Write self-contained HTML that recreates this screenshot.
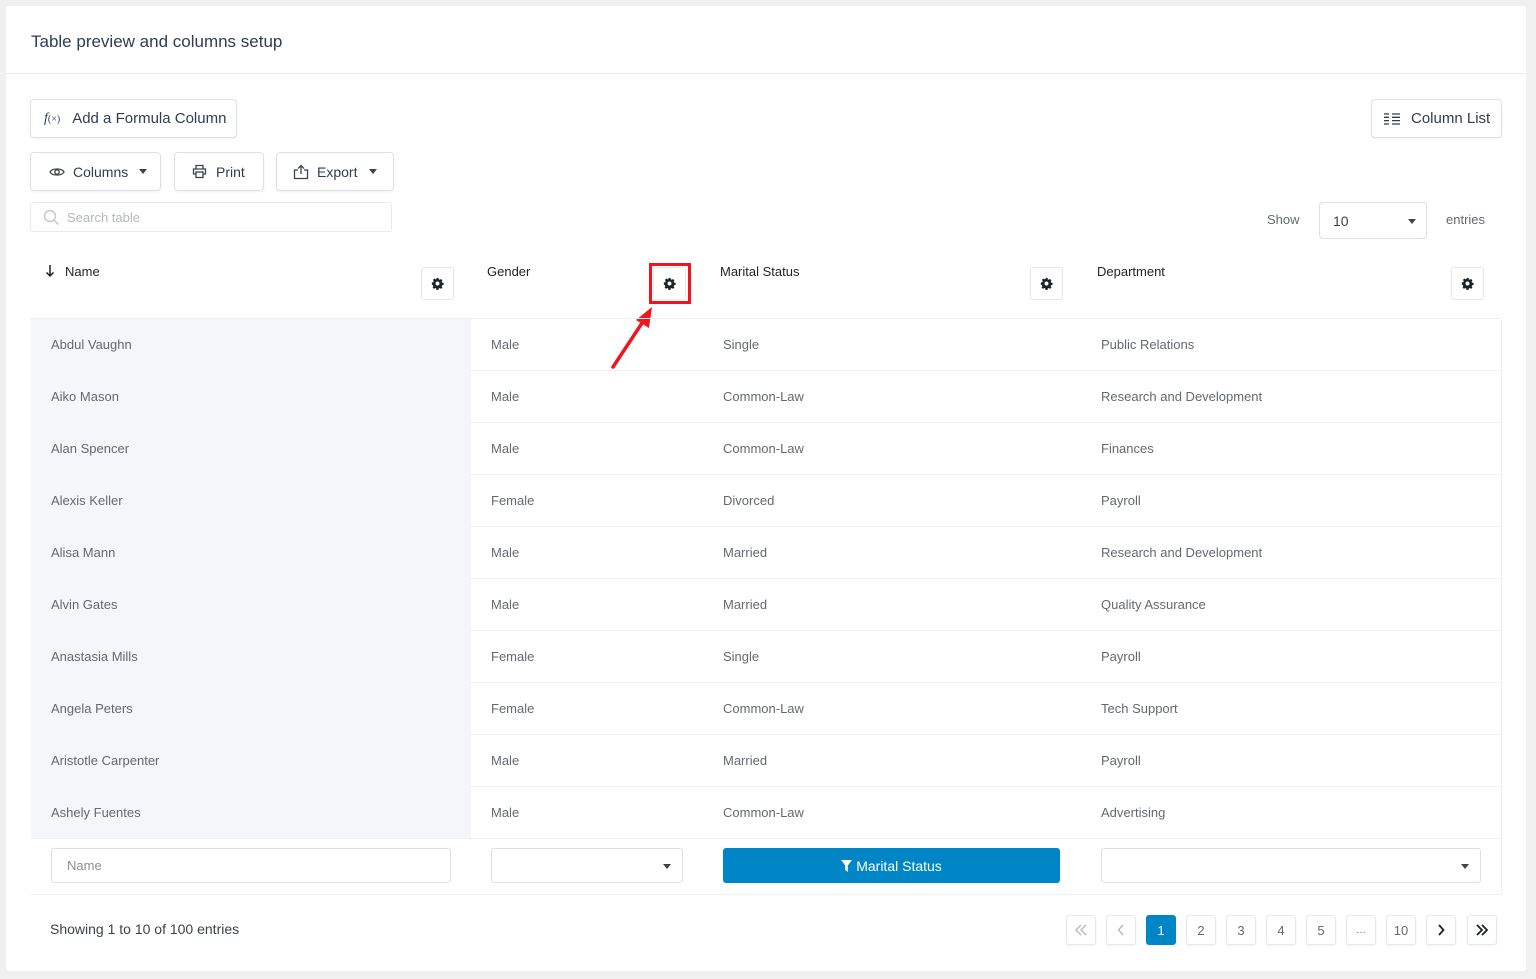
<!DOCTYPE html>
<html><head><meta charset="utf-8"><style>
*{box-sizing:border-box;margin:0;padding:0}
body{width:1536px;height:979px;background:#f0f0f1;font-family:"Liberation Sans",sans-serif;position:relative;overflow:hidden;color:#3c434a}
.card{position:absolute;left:6px;top:6px;width:1520px;height:965px;background:#fff;border-radius:3px}
.hdr{position:absolute;left:0;top:0;width:1520px;height:68px;border-bottom:1px solid #e8ebef}
.hdr span{position:absolute;left:25px;top:26px;font-size:17px;color:#2f3d52}
.btn{position:absolute;background:#fff;border:1px solid #dde1e6;border-radius:4px;box-shadow:0 1px 2px rgba(0,0,0,.06);font-size:14px;color:#2f3d52;display:flex;align-items:center}
.a{position:absolute}
.gear{position:absolute;width:33px;height:33px;border:1px solid #e3e6ea;border-radius:3px;background:#fff;display:flex;align-items:center;justify-content:center}
.th{position:absolute;font-size:13px;color:#1d2327;top:264px}
.td{position:absolute;font-size:13px;color:#646970}
.line{position:absolute;height:1px;background:#eef0f3}
.pg{position:absolute;top:915px;width:30px;height:30px;border:1px solid #e6e8eb;border-radius:3px;background:#fff;font-size:13px;color:#646970;display:flex;align-items:center;justify-content:center;box-shadow:0 1px 2px rgba(0,0,0,.05)}
.caret{width:0;height:0;border-left:4.5px solid transparent;border-right:4.5px solid transparent;border-top:5px solid #3c434a;display:inline-block}
</style></head><body>
<div class="card">
<div class="hdr"><span>Table preview and columns setup</span></div>
</div>
<svg width="0" height="0" style="position:absolute"><defs><symbol id="g" viewBox="0 0 16 16"><path fill="#1d2327" d="M6.8 1h2.4l.4 1.8 1.2.6 1.6-1 1.7 1.7-1 1.6.6 1.2 1.8.4v2.4l-1.8.4-.6 1.2 1 1.6-1.7 1.7-1.6-1-1.2.6-.4 1.8H6.8l-.4-1.8-1.2-.6-1.6 1-1.7-1.7 1-1.6-.6-1.2L1 9.2V6.8l1.8-.4.6-1.2-1-1.6 1.7-1.7 1.6 1 1.2-.6zM8 5.6A2.4 2.4 0 1 0 8 10.4 2.4 2.4 0 1 0 8 5.6z"/></symbol></defs></svg>

<div class="btn" style="left:30px;top:99px;width:207px;height:39px;padding-left:13px"><span style="font-family:'Liberation Serif',serif;font-style:italic;font-size:14px;margin-right:12px">f<span style="font-size:10px;font-style:normal">(×)</span></span><span style="font-size:15px">Add a Formula Column</span></div>
<div class="btn" style="left:1371px;top:99px;width:131px;height:39px;padding-left:12px"><svg width="16" height="12" viewBox="0 0 16 12" style="margin-right:11px"><g stroke="#2f3d52" stroke-width="1.3"><path d="M0 1h5M0 4.3h5M0 7.6h5M0 11h5M8 1h8M8 4.3h8M8 7.6h8M8 11h8"/></g></svg><span style="font-size:15px">Column List</span></div>

<div class="btn" style="left:30px;top:152px;width:131px;height:39px;padding-left:18px"><svg width="16" height="12" viewBox="0 0 16 12" style="margin-right:8px"><path d="M1 6C3 2 13 2 15 6 13 10 3 10 1 6z" fill="none" stroke="#3c434a" stroke-width="1.3"/><circle cx="8" cy="6" r="2.2" fill="none" stroke="#3c434a" stroke-width="1.3"/></svg><b style="font-weight:normal;margin-right:11px">Columns</b><span class="caret"></span></div>
<div class="btn" style="left:174px;top:152px;width:90px;height:39px;padding-left:17px"><svg width="15" height="15" viewBox="0 0 15 15" style="margin-right:9px"><g fill="none" stroke="#3c434a" stroke-width="1.3"><path d="M4 5V1.5h7V5M4 10H1.5V5h12v5H11"/><rect x="4" y="8" width="7" height="5.5"/></g></svg>Print</div>
<div class="btn" style="left:276px;top:152px;width:118px;height:39px;padding-left:16px"><svg width="16" height="16" viewBox="0 0 16 16" style="margin-right:8px"><g fill="none" stroke="#3c434a" stroke-width="1.3"><path d="M5 6H1.5v8.5h13V6H11M8 10V1.5M5 4.5l3-3 3 3"/></g></svg><b style="font-weight:normal;margin-right:12px">Export</b><span class="caret"></span></div>

<div class="a" style="left:30px;top:202px;width:362px;height:30px;border:1px solid #e8ebef;border-radius:3px"><svg width="17" height="17" viewBox="0 0 17 17" style="position:absolute;left:12px;top:6px"><circle cx="7" cy="7" r="5.5" fill="none" stroke="#c3c8ce" stroke-width="1.4"/><path d="M11 11l4.5 4.5" stroke="#c3c8ce" stroke-width="1.4"/></svg><span style="position:absolute;left:36px;top:7px;font-size:13px;color:#b4b9be">Search table</span></div>

<div class="a" style="left:1267px;top:212px;font-size:13px;color:#646970">Show</div>
<div class="a" style="left:1319px;top:202px;width:108px;height:37px;border:1px solid #dcdfe3;border-radius:4px"><span style="position:absolute;left:13px;top:10px;font-size:14px;color:#3c434a">10</span><span class="caret" style="position:absolute;left:88px;top:16px"></span></div>
<div class="a" style="left:1446px;top:212px;font-size:13px;color:#646970">entries</div>

<svg class="a" style="left:45px;top:264px" width="10" height="14"><path d="M5 1v11M1.5 8.5L5 12l3.5-3.5" fill="none" stroke="#1d2327" stroke-width="1.5"/></svg>
<div class="th" style="left:65px">Name</div>
<div class="th" style="left:487px">Gender</div>
<div class="th" style="left:720px">Marital Status</div>
<div class="th" style="left:1097px">Department</div>
<div class="gear" style="left:421px;top:267px"><svg width="13" height="13"><use href="#g"/></svg></div>
<div class="gear" style="left:653px;top:267px"><svg width="13" height="13"><use href="#g"/></svg></div>
<div class="gear" style="left:1030px;top:267px"><svg width="13" height="13"><use href="#g"/></svg></div>
<div class="gear" style="left:1451px;top:267px"><svg width="13" height="13"><use href="#g"/></svg></div>
<div class="a" style="left:649px;top:263px;width:42px;height:41px;border:3px solid #f0141e"></div>
<svg class="a" style="left:600px;top:300px" width="60" height="75"><path d="M13 67L46 17" stroke="#f0141e" stroke-width="3.5" stroke-linecap="round"/><path d="M52 7L36 20 49 28z" fill="#f0141e"/></svg>

<div class="line" style="left:30px;top:318px;width:1472px"></div>
<div class="a" style="left:31px;top:319px;width:440px;height:519px;background:#f4f6fa"></div>
<div class="a" style="left:1501px;top:318px;width:1px;height:577px;background:#eef0f3"></div>
<div id="rows"></div>
<div class="line" style="left:30px;top:838px;width:1472px"></div>
<div class="line" style="left:30px;top:894px;width:1472px"></div>

<div class="a" style="left:51px;top:848px;width:400px;height:35px;border:1px solid #dcdfe3;border-radius:3px"><span style="position:absolute;left:15px;top:9px;font-size:13px;color:#8c8f94">Name</span></div>
<div class="a" style="left:491px;top:848px;width:192px;height:35px;border:1px solid #dcdfe3;border-radius:3px"><span class="caret" style="position:absolute;left:171px;top:15px"></span></div>
<div class="a" style="left:723px;top:848px;width:337px;height:35px;background:#0085c6;border-radius:3px;color:#fff;font-size:14px;display:flex;align-items:center;justify-content:center"><svg width="11" height="12" viewBox="0 0 11 12" style="margin-right:4px"><path d="M0 0h11L6.8 5.5V12L4.2 10V5.5z" fill="#fff"/></svg>Marital Status</div>
<div class="a" style="left:1101px;top:848px;width:380px;height:35px;border:1px solid #dcdfe3;border-radius:3px"><span class="caret" style="position:absolute;left:359px;top:15px"></span></div>

<div class="a" style="left:50px;top:921px;font-size:14px;color:#3c434a">Showing 1 to 10 of 100 entries</div>
<div class="pg" style="left:1066px"><svg width="14" height="12"><path d="M7 1L2 6l5 5M12 1L7 6l5 5" fill="none" stroke="#b4b9be" stroke-width="1.4"/></svg></div>
<div class="pg" style="left:1106px"><svg width="8" height="12"><path d="M6 1L1.5 6 6 11" fill="none" stroke="#b4b9be" stroke-width="1.4"/></svg></div>
<div class="pg" style="left:1146px;background:#0085c6;color:#fff;border-color:#0085c6">1</div>
<div class="pg" style="left:1186px">2</div>
<div class="pg" style="left:1226px">3</div>
<div class="pg" style="left:1266px">4</div>
<div class="pg" style="left:1306px">5</div>
<div class="pg" style="left:1346px;font-size:10px">…</div>
<div class="pg" style="left:1386px">10</div>
<div class="pg" style="left:1426px"><svg width="8" height="12"><path d="M2 1l4.5 5L2 11" fill="none" stroke="#1d2327" stroke-width="1.8"/></svg></div>
<div class="pg" style="left:1467px"><svg width="14" height="12"><path d="M2 1l5 5-5 5M7 1l5 5-5 5" fill="none" stroke="#1d2327" stroke-width="1.8"/></svg></div>

<script>
var d=[["Abdul Vaughn","Male","Single","Public Relations"],["Aiko Mason","Male","Common-Law","Research and Development"],["Alan Spencer","Male","Common-Law","Finances"],["Alexis Keller","Female","Divorced","Payroll"],["Alisa Mann","Male","Married","Research and Development"],["Alvin Gates","Male","Married","Quality Assurance"],["Anastasia Mills","Female","Single","Payroll"],["Angela Peters","Female","Common-Law","Tech Support"],["Aristotle Carpenter","Male","Married","Payroll"],["Ashely Fuentes","Male","Common-Law","Advertising"]];
var h="";d.forEach(function(r,i){var y=337+i*52;
h+='<div class="td" style="left:51px;top:'+y+'px">'+r[0]+'</div><div class="td" style="left:491px;top:'+y+'px">'+r[1]+'</div><div class="td" style="left:723px;top:'+y+'px">'+r[2]+'</div><div class="td" style="left:1101px;top:'+y+'px">'+r[3]+'</div>';
if(i>0)h+='<div class="line" style="left:471px;top:'+(318+i*52)+'px;width:1031px"></div>';});
document.getElementById("rows").innerHTML=h;
</script>
</body></html>
